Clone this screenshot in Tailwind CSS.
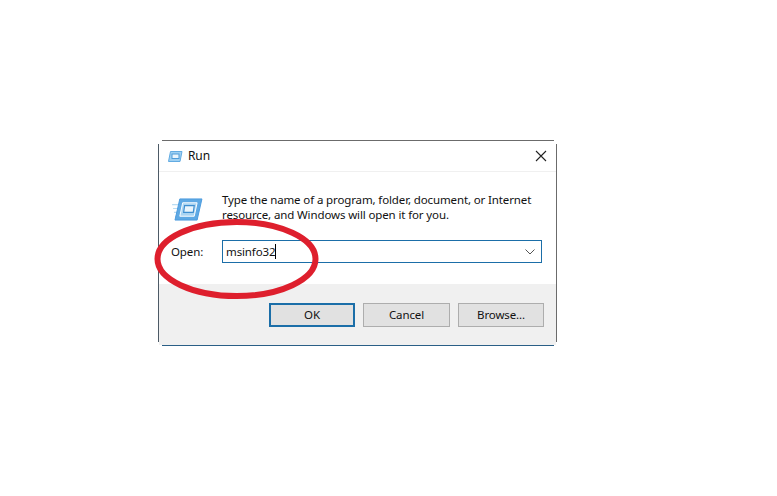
<!DOCTYPE html>
<html>
<head>
<meta charset="utf-8">
<script src="https://cdn.jsdelivr.net/npm/@tailwindcss/browser@4"></script>
</head>
<body class="bg-white">
<div class="relative w-[777px] h-[496px] overflow-hidden pt-[140px] pl-[158px] font-['Noto_Sans','Open_Sans',sans-serif] text-[11.5px] tracking-[-0.125px] text-[#111]">
  <div class="relative w-[399px] h-[206px] flex flex-col">
    <div class="absolute top-0 left-[4px] right-[3px] h-px bg-[#6b6b6b]"></div>
    <div class="absolute top-[4px] bottom-[4px] left-0 w-px bg-[#4d5a66]"></div>
    <div class="absolute top-[4px] bottom-[4px] right-0 w-px bg-[#6b6b6b]"></div>
    <div class="absolute bottom-0 left-[4px] right-[3px] h-px bg-[#2a5f86]"></div>

    <div class="h-[31px] mt-px mx-px flex items-center border-b border-[#f0f0f0] pl-[8px]">
      <svg width="16" height="13" viewBox="0 0 16 13" class="mr-[5px]">
        <path d="M3.5 1.5 L15 1.5 L13 11.5 L1.5 11.5 Z" fill="#9fd0f2" stroke="#62abe2"/>
        <rect x="5" y="4" width="7" height="4.5" fill="#eaf5fc" stroke="#4f9bd8"/>
      </svg>
      <span class="text-[12px] leading-none">Run</span>
      <svg width="12" height="12" viewBox="0 0 12 12" class="ml-auto mr-[9px]">
        <path d="M1 1 L11 11 M11 1 L1 11" stroke="#222" stroke-width="1.1" fill="none"/>
      </svg>
    </div>

    <div class="flex-1 mx-px flex flex-col">
      <div class="flex pl-[13px] pt-[20px] h-[68px]">
        <svg width="31" height="25" viewBox="0 0 32 26" class="mt-[5px] mr-[19px]">
          <path d="M0 8 H7 M1 12 H6 M2 16 H6 M3 20 H6" stroke="#b9dcf3" stroke-width="1.2"/>
          <path d="M8 2 L31 2 L26 24 L3 24 Z" fill="#5ea9e4" stroke="#4a9ade"/>
          <path d="M11 6 L26 6 L23 20 L8 20 Z" fill="#a9d4f2" stroke="#ffffff"/>
          <path d="M13 9 L23 9 L22 16 L12 16 Z" fill="#eaf5fc" stroke="#3f8fd0" stroke-width="1.2"/>
        </svg>
        <p class="leading-[15px] w-[330px]">Type the name of a program, folder, document, or Internet resource, and Windows will open it for you.</p>
      </div>
      <div class="flex items-center pl-[12px]">
        <span class="w-[51px]">Open:</span>
        <div class="w-[320px] h-[23px] border border-[#1b6ea8] flex items-center pl-[3px] pr-[6px] bg-white">
          <span>msinfo32</span><span class="w-px h-[15px] bg-black"></span>
          <svg width="10" height="6" viewBox="0 0 10 6" class="ml-auto">
            <path d="M0.5 0.5 L5 5 L9.5 0.5" stroke="#555" fill="none"/>
          </svg>
        </div>
      </div>
    </div>

    <div class="h-[61px] mx-px mb-px bg-[#f0f0f0] flex gap-[8px] pt-[19px] pl-[110px]">
      <button class="w-[86px] h-[24px] bg-[#e1e1e1] border-2 border-[#1b6ea8] leading-none">OK</button>
      <button class="w-[87px] h-[24px] bg-[#e1e1e1] border border-[#adadad] leading-none">Cancel</button>
      <button class="w-[86px] h-[24px] bg-[#e1e1e1] border border-[#adadad] leading-none">Browse...</button>
    </div>
  </div>

  <svg class="absolute left-[150px] top-[215px]" width="175" height="90" viewBox="0 0 175 90">
    <ellipse cx="86.5" cy="44" rx="79" ry="37" fill="none" stroke="#de1f2d" stroke-width="6"/>
  </svg>
</div>
</body>
</html>
